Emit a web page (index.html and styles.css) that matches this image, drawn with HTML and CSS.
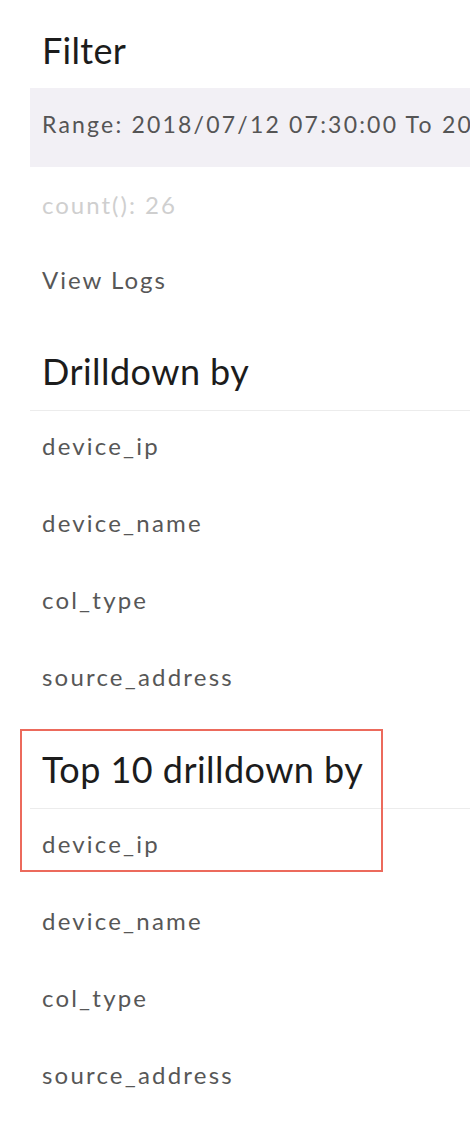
FILE: index.html
```html
<!DOCTYPE html>
<html lang="en">
<head>
<meta charset="utf-8">
<title>Filter</title>
<link rel="stylesheet" href="styles.css">
</head>
<body>
<div class="panel">
  <section class="filter">
    <h2 class="panel-title">Filter</h2>
    <div class="range">Range: 2018/07/12 07:30:00 To 2018/07/12 08:30:00</div>
    <div class="row muted">count(): 26</div>
    <div class="row">View Logs</div>
  </section>
  <section class="group">
    <h2 class="group-title">Drilldown by</h2>
    <ul class="list">
      <li class="item">device_ip</li>
      <li class="item">device_name</li>
      <li class="item">col_type</li>
      <li class="item">source_address</li>
    </ul>
  </section>
  <section class="group">
    <h2 class="group-title">Top 10 drilldown by</h2>
    <ul class="list">
      <li class="item">device_ip</li>
      <li class="item">device_name</li>
      <li class="item">col_type</li>
      <li class="item">source_address</li>
    </ul>
    <div class="highlight"></div>
  </section>
</div>
</body>
</html>
```

FILE: styles.css
```css
html, body {
  margin: 0;
  padding: 0;
  background: #ffffff;
}
body {
  font-family: "Lato", "Liberation Sans", sans-serif;
  overflow: hidden;
}
.panel {
  padding-left: 30px;
}
.filter {
  padding-bottom: 4px;
}
.panel-title {
  margin: 0 0 18px 0;
  padding: 30px 0 0 12px;
  font-size: 36px;
  line-height: 40px;
  font-weight: 400;
  letter-spacing: 0.3px;
  color: #1c1c1c;
}
.range {
  height: 72px;
  padding: 0 0 7px 12px;
  line-height: 72px;
  background: #f2f0f5;
  font-size: 23px;
  letter-spacing: 2.2px;
  color: #555555;
  white-space: nowrap;
  overflow: hidden;
}
.row {
  padding-left: 12px;
  font-size: 24px;
  letter-spacing: 2px;
  line-height: 75px;
  color: #575757;
  white-space: nowrap;
}
.muted {
  color: #cfcfcf;
}
.group {
  position: relative;
  margin-top: 30px;
}
.group-title {
  margin: 0;
  padding: 0 0 19px 12px;
  font-size: 36px;
  line-height: 40px;
  font-weight: 400;
  letter-spacing: 0.45px;
  color: #1c1c1c;
  border-bottom: 1px solid #ececec;
}
.list {
  list-style: none;
  margin: 0;
  padding: 0;
}
.item {
  padding: 0 0 7px 12px;
  font-size: 24px;
  letter-spacing: 2.2px;
  line-height: 70px;
  color: #575757;
  white-space: nowrap;
}
.highlight {
  position: absolute;
  left: -10px;
  top: -20px;
  width: 359px;
  height: 139px;
  border: 2px solid #ec6a5c;
  pointer-events: none;
}
```
